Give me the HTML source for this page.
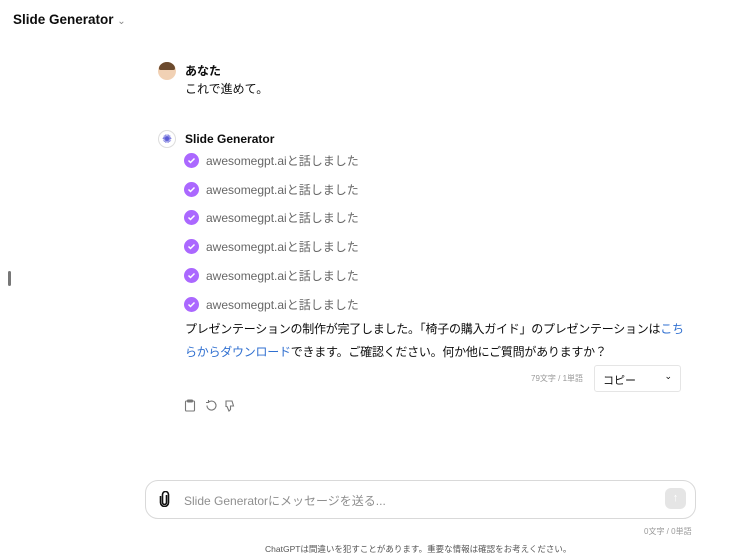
<!DOCTYPE html>
<html><head><meta charset="utf-8"><style>
*{margin:0;padding:0;box-sizing:border-box}
body{width:729px;height:559px;background:#fff;font-family:"Liberation Sans","Noto Sans CJK JP",sans-serif;color:#0d0d0d;position:relative;overflow:hidden}
.a{position:absolute;white-space:nowrap}
.chk{position:absolute;left:184px;width:15px;height:15px;border-radius:50%;background:#ab68ff}
.chk svg{position:absolute;left:3px;top:3px}
.tool{position:absolute;left:206px;font-size:12px;color:#676767}
</style></head><body>
<div class="a" style="left:13px;top:12px;font-size:13.5px;font-weight:bold">Slide Generator <span style="font-weight:normal;color:#888;font-size:10px">⌄</span></div>
<div class="a" style="left:8px;top:271px;width:3px;height:15px;background:#777;border-radius:2px"></div>

<div class="a" style="left:158px;top:62px;width:18px;height:18px;border-radius:50%;background:#f1d1b4;overflow:hidden"><div style="position:absolute;left:1px;top:0;width:16px;height:8px;background:#6b4a2e;border-radius:8px 8px 2px 2px"></div></div>
<div class="a" style="left:185px;top:62px;font-size:12px;font-weight:bold">あなた</div>
<div class="a" style="left:185px;top:80px;font-size:12px">これで進めて。</div>

<div class="a" style="left:158px;top:130px;width:18px;height:18px;border-radius:50%;border:1px solid #ddd;display:flex;align-items:center;justify-content:center;color:#5b5bd6;font-size:12px">✺</div>
<div class="a" style="left:185px;top:132px;font-size:12px;font-weight:bold">Slide Generator</div>

<div class="chk" style="top:153px"><svg width="9" height="9" viewBox="0 0 9 9"><path d="M1.5 4.5l2 2 4-4" stroke="#fff" stroke-width="1.5" fill="none"/></svg></div><div class="tool a" style="top:152px">awesomegpt.aiと話しました</div>
<div class="chk" style="top:182px"><svg width="9" height="9" viewBox="0 0 9 9"><path d="M1.5 4.5l2 2 4-4" stroke="#fff" stroke-width="1.5" fill="none"/></svg></div><div class="tool a" style="top:181px">awesomegpt.aiと話しました</div>
<div class="chk" style="top:210px"><svg width="9" height="9" viewBox="0 0 9 9"><path d="M1.5 4.5l2 2 4-4" stroke="#fff" stroke-width="1.5" fill="none"/></svg></div><div class="tool a" style="top:209px">awesomegpt.aiと話しました</div>
<div class="chk" style="top:239px"><svg width="9" height="9" viewBox="0 0 9 9"><path d="M1.5 4.5l2 2 4-4" stroke="#fff" stroke-width="1.5" fill="none"/></svg></div><div class="tool a" style="top:238px">awesomegpt.aiと話しました</div>
<div class="chk" style="top:268px"><svg width="9" height="9" viewBox="0 0 9 9"><path d="M1.5 4.5l2 2 4-4" stroke="#fff" stroke-width="1.5" fill="none"/></svg></div><div class="tool a" style="top:267px">awesomegpt.aiと話しました</div>
<div class="chk" style="top:297px"><svg width="9" height="9" viewBox="0 0 9 9"><path d="M1.5 4.5l2 2 4-4" stroke="#fff" stroke-width="1.5" fill="none"/></svg></div><div class="tool a" style="top:296px">awesomegpt.aiと話しました</div>

<div class="a" style="left:185px;top:318px;font-size:12px;line-height:23px;white-space:normal;width:505px;letter-spacing:-0.25px">プレゼンテーションの制作が完了しました。「椅子の購入ガイド」のプレゼンテーションは<span style="color:#2f6fd0">こちらからダウンロード</span>できます。ご確認ください。何か他にご質問がありますか？</div>

<div class="a" style="left:531px;top:373px;font-size:8px;color:#999">79文字 / 1単語</div>
<div class="a" style="left:594px;top:365px;width:87px;height:27px;border:1px solid #e5e5e5;border-radius:3px;font-size:11px;padding:6px 0 0 8px">コピー<span style="position:absolute;right:8px;top:5px;font-size:9px">⌄</span></div>

<svg class="a" style="left:184px;top:399px" width="60" height="13" viewBox="0 0 60 13" fill="none" stroke="#777" stroke-width="1.1">
<rect x="1.5" y="2" width="9" height="10" rx="1"/><rect x="3.5" y="1" width="5" height="2" rx=".5"/>
<path d="M23 6.5a4.5 4.5 0 1 0 1.5-3.3M24.5 1v2.5H22"/>
<path d="M42 2h6l1.5 5h-3v3.5l-1.5 1.5-2-4.5H42z"/>
</svg>

<div class="a" style="left:145px;top:480px;width:551px;height:39px;border:1px solid #d9d9d9;border-radius:13px"></div>
<svg class="a" style="left:159px;top:491px" width="11" height="16" viewBox="0 0 11 16" fill="none" stroke="#111" stroke-width="1.6"><path d="M7.5 4v7.5a2 2 0 0 1-4 0V3.5a3 3 0 0 1 6 0v8a4 4 0 0 1-8 0V5"/></svg>
<div class="a" style="left:184px;top:492px;font-size:12px;color:#8f8f8f">Slide Generatorにメッセージを送る...</div>
<div class="a" style="left:665px;top:488px;width:21px;height:21px;border-radius:6px;background:#e5e5e5;color:#fff;font-size:11px;text-align:center;line-height:21px">↑</div>
<div class="a" style="left:644px;top:526px;font-size:8px;color:#999">0文字 / 0単語</div>
<div class="a" style="left:265px;top:543px;font-size:8.5px;color:#555">ChatGPTは間違いを犯すことがあります。重要な情報は確認をお考えください。</div>
</body></html>
